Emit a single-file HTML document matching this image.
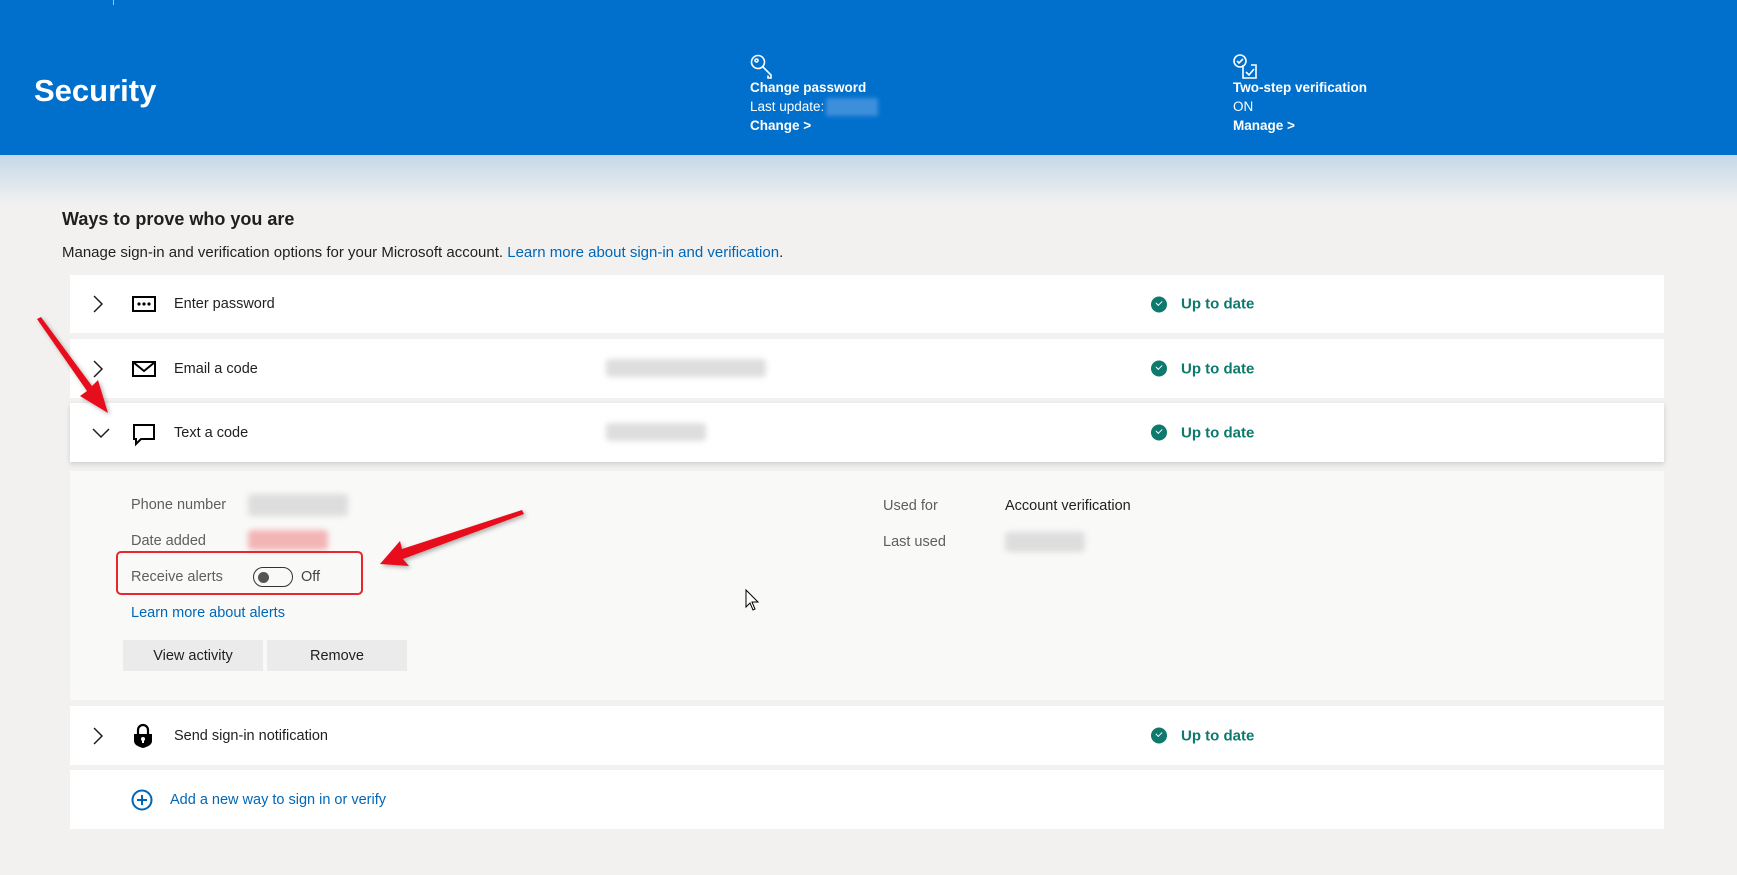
<!DOCTYPE html>
<html><head><meta charset="utf-8"><style>
*{margin:0;padding:0;box-sizing:border-box}
body{width:1737px;height:875px;overflow:hidden;background:#f2f1f0;font-family:"Liberation Sans",sans-serif;color:#201f1e;position:relative}
.hdr{position:absolute;left:0;top:0;width:1737px;height:155px;background:#0070cc;color:#fff}
.grad{position:absolute;left:0;top:155px;width:1737px;height:50px;background:linear-gradient(#c6d8e8,#f2f1f0)}
.abs{position:absolute}
.card{position:absolute;left:70px;width:1594px;background:#fff}
.lbl{position:absolute;left:104px;font-size:14.5px;top:50%;transform:translateY(-50%)}
.chev{position:absolute;left:22px;top:50%;transform:translateY(-50%)}
.ico{position:absolute;left:62px;top:50%;transform:translateY(-50%)}
.st{position:absolute;left:1081px;top:50%;transform:translateY(-50%);display:flex;align-items:center;font-size:15px;font-weight:bold;color:#0e7a6d}
.st i{width:16px;height:16px;border-radius:50%;background:#0e7a6d;margin-right:14px;display:inline-block;position:relative}
.st i:after{content:"";position:absolute;left:5px;top:4px;width:5px;height:3px;border-left:1.5px solid #fff;border-bottom:1.5px solid #fff;transform:rotate(-45deg)}
.blur{position:absolute;background:#ddd;filter:blur(3px);border-radius:4px}
.dl{position:absolute;font-size:14.5px;color:#605e5c}
.btn{position:absolute;top:640px;width:140px;height:31px;background:#ebebeb;font-size:14.5px;display:flex;align-items:center;justify-content:center}
.h13{font-size:13.5px}
</style></head><body>
<div class="hdr">
<div class="abs" style="left:113px;top:0;width:1px;height:5px;background:#9cc6ee"></div>
<div class="abs" style="left:34px;top:73px;font-size:31px;font-weight:bold">Security</div>
<svg class="abs" style="left:750px;top:54px" width="26" height="26" viewBox="0 0 26 26" fill="none" stroke="#fff" stroke-width="1.6"><circle cx="8" cy="8" r="6.5"/><circle cx="6.5" cy="6.5" r="1.5"/><path d="M12 12 L21 21 V24 H18 V21.5"/></svg>
<div class="abs h13" style="left:750px;top:80px;font-weight:bold">Change password</div>
<div class="abs h13" style="left:750px;top:99px">Last update:</div>
<div class="abs" style="left:826px;top:98px;width:52px;height:18px;background:#3d8fdb;filter:blur(2px)"></div>
<div class="abs h13" style="left:750px;top:118px;font-weight:bold">Change &gt;</div>
<svg class="abs" style="left:1233px;top:54px" width="26" height="26" viewBox="0 0 26 26" fill="none" stroke="#fff" stroke-width="1.6"><circle cx="7" cy="7" r="6"/><path d="M4 7l2 2 4-4"/><path d="M10 11v13h13V11h-5"/><path d="M13 18l3 3 5-6"/></svg>
<div class="abs h13" style="left:1233px;top:80px;font-weight:bold">Two-step verification</div>
<div class="abs h13" style="left:1233px;top:99px">ON</div>
<div class="abs h13" style="left:1233px;top:118px;font-weight:bold">Manage &gt;</div>
</div>
<div class="grad"></div>
<div class="abs" style="left:62px;top:209px;font-size:18px;font-weight:bold">Ways to prove who you are</div>
<div class="abs" style="left:62px;top:244px;font-size:15px">Manage sign-in and verification options for your Microsoft account. <span style="color:#0067b8">Learn more about sign-in and verification</span>.</div>

<div class="card" style="top:275px;height:58px">
<svg class="chev" width="12" height="18" viewBox="0 0 12 18"><path d="M2 1l8 8-8 8" fill="none" stroke="#201f1e" stroke-width="1.5"/></svg>
<svg class="ico" width="24" height="18" viewBox="0 0 24 18"><rect x="1" y="2" width="22" height="14" fill="none" stroke="#000" stroke-width="2"/><circle cx="7" cy="9" r="1.6"/><circle cx="12" cy="9" r="1.6"/><circle cx="17" cy="9" r="1.6"/></svg>
<div class="lbl">Enter password</div>
<div class="st"><i></i>Up to date</div></div>

<div class="card" style="top:339px;height:59px">
<svg class="chev" width="12" height="18" viewBox="0 0 12 18"><path d="M2 1l8 8-8 8" fill="none" stroke="#201f1e" stroke-width="1.5"/></svg>
<svg class="ico" width="24" height="18" viewBox="0 0 24 18"><rect x="1" y="2" width="22" height="14" fill="none" stroke="#000" stroke-width="2"/><path d="M1 2l11 9 11-9" fill="none" stroke="#000" stroke-width="2"/></svg>
<div class="lbl">Email a code</div>
<div class="blur" style="left:536px;top:20px;width:160px;height:18px"></div>
<div class="st"><i></i>Up to date</div></div>

<div class="card" style="top:403px;height:59px;box-shadow:0 2px 5px rgba(0,0,0,.15)">
<svg class="chev" width="18" height="12" viewBox="0 0 18 12"><path d="M1 2l8 8 8-8" fill="none" stroke="#201f1e" stroke-width="1.5"/></svg>
<svg class="ico" width="24" height="24" viewBox="0 0 24 24" style="margin-top:2px"><path d="M2 2h20v14H9l-5 5v-5H2z" fill="none" stroke="#000" stroke-width="2"/></svg>
<div class="lbl">Text a code</div>
<div class="blur" style="left:536px;top:20px;width:100px;height:18px"></div>
<div class="st"><i></i>Up to date</div></div>

<div class="card" style="top:471px;height:229px;background:#f9f9f8"></div>
<div class="dl" style="left:131px;top:497px">Phone number</div>
<div class="blur" style="left:248px;top:494px;width:100px;height:22px"></div>
<div class="dl" style="left:131px;top:533px">Date added</div>
<div class="blur" style="left:248px;top:530px;width:80px;height:20px;background:#f2b5b5"></div>
<div class="dl" style="left:131px;top:569px">Receive alerts</div>
<div class="abs" style="left:253px;top:567px;width:40px;height:20px;border:1.5px solid #333;border-radius:10px"><div style="position:absolute;left:4px;top:3.5px;width:11px;height:11px;border-radius:50%;background:#555"></div></div>
<div class="abs" style="left:301px;top:569px;font-size:14.5px;color:#444">Off</div>
<div class="abs" style="left:131px;top:605px;font-size:14.5px;color:#0067b8">Learn more about alerts</div>
<div class="btn" style="left:123px">View activity</div>
<div class="btn" style="left:267px">Remove</div>
<div class="dl" style="left:883px;top:498px">Used for</div>
<div class="abs" style="left:1005px;top:498px;font-size:14.5px">Account verification</div>
<div class="dl" style="left:883px;top:534px">Last used</div>
<div class="blur" style="left:1005px;top:532px;width:80px;height:20px"></div>
<div class="abs" style="left:116px;top:551px;width:247px;height:44px;border:2px solid #e8262b;border-radius:5px"></div>

<div class="card" style="top:706px;height:59px">
<svg class="chev" width="12" height="18" viewBox="0 0 12 18"><path d="M2 1l8 8-8 8" fill="none" stroke="#201f1e" stroke-width="1.5"/></svg>
<svg class="ico" width="22" height="26" viewBox="0 0 22 26"><path d="M6 11V7a5 5 0 0110 0v4" fill="none" stroke="#000" stroke-width="2.2"/><path d="M2 11h18v7c0 4-5 6-9 7-4-1-9-3-9-7z"/><circle cx="11" cy="16" r="2" fill="#fff"/><rect x="10" y="16" width="2" height="4" fill="#fff"/></svg>
<div class="lbl">Send sign-in notification</div>
<div class="st"><i></i>Up to date</div></div>

<div class="card" style="top:770px;height:59px">
<svg class="abs" style="left:61px;top:19px" width="22" height="22" viewBox="0 0 22 22"><circle cx="11" cy="11" r="9.5" fill="none" stroke="#0067b8" stroke-width="2"/><path d="M11 6v10M6 11h10" stroke="#0067b8" stroke-width="2"/></svg>
<div class="lbl" style="left:100px;color:#0067b8">Add a new way to sign in or verify</div></div>

<svg class="abs" style="left:0;top:0" width="1737" height="875" viewBox="0 0 1737 875">
<defs><filter id="s"><feDropShadow dx="2" dy="2" stdDeviation="2" flood-opacity=".3"/></filter></defs>
<path d="M37 319 L41 317 L92 386 L98 380 L108 413 L80 396 L87 391 Z" fill="#e8101a" filter="url(#s)"/>
<path d="M522 510 L524 514 L403 559 L409 566 L380 564 L400 541 L402 549 Z" fill="#e8101a" filter="url(#s)"/>
<path d="M746 590 v17 l4-4 3 7 2-1 -3-7 h6 z" fill="#fff" stroke="#000" stroke-width="1"/>
</svg>
</body></html>
